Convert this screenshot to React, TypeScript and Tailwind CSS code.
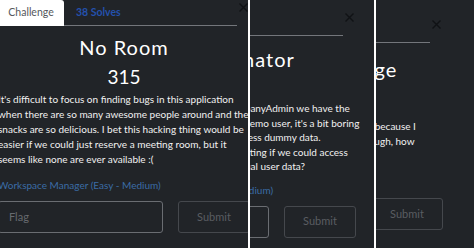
import React from 'react';

type ModalProps = {
  title: string;
  points: string;
  lines: string[];
  link: string;
  shift: string;
  top: string;
  titleMt: string;
  pointsMt: string;
  linkMt: string;
  leading: string;
};

const CloseIcon = () => (
  <svg className="ml-[2px] mr-[2px] mt-[3px] shrink-0" width="9" height="9" viewBox="0 0 9 9">
    <path d="M0.5 0.5 L8.5 8.5 M8.5 0.5 L0.5 8.5" stroke="#101215" strokeWidth="1.4" />
  </svg>
);

const ChallengeModal = ({ title, points, lines, link, shift, top, titleMt, pointsMt, linkMt, leading }: ModalProps) => (
  <div className={`flex w-[252px] shrink-0 flex-col ${shift} ${top}`}>
    <div className="flex h-[26px] items-start">
      <div className="flex h-full flex-1">
        <div className="flex w-[66px] items-center justify-center rounded-t-[3px] border-b border-white bg-white text-[10.5px] text-[#55585c]">
          Challenge
        </div>
        <div className="flex flex-1 items-center border-b border-[#73767b] pl-[12px] text-[10.5px] font-bold text-[#2451ad]">
          38 Solves
        </div>
      </div>
      <CloseIcon />
    </div>

    <h2 className={`${titleMt} text-center text-[20px] leading-[24px] tracking-[1px] text-white`}>{title}</h2>
    <h3 className={`${pointsMt} text-center text-[19px] leading-[22px] text-white`}>{points}</h3>

    <p className={`mt-[4px] whitespace-nowrap text-[10px] ${leading} text-[#f1f1f1]`}>
      {lines.map((line, i) => (
        <React.Fragment key={i}>
          {line}
          {i < lines.length - 1 && <br />}
        </React.Fragment>
      ))}
    </p>

    <a className={`${linkMt} whitespace-nowrap text-[10px] leading-[15px] text-[#3b6ca6]`}>{link}</a>

    <div className="mt-[8px] flex gap-[15px]">
      <div className="flex h-[32px] flex-1 items-center rounded-[3px] border border-[#6a6d72] pl-[10px] text-[11px] text-[#676a6f]">
        Flag
      </div>
      <div className="flex h-[32px] w-[72px] items-center justify-center rounded-[3px] border border-[#45484d] text-[11px] text-[#5a5d62]">
        Submit
      </div>
    </div>
  </div>
);

export default function App() {
  return (
    <div className="flex h-[248px] w-[474px] overflow-hidden bg-[#212428] font-[Lato,sans-serif]">
      <div className="flex w-[250px] shrink-0 overflow-hidden border-r-2 border-white">
        <ChallengeModal
          title="No Room"
          points="315"
          lines={[
            "It's difficult to focus on finding bugs in this application",
            'when there are so many awesome people around and the',
            'snacks are so delicious. I bet this hacking thing would be',
            'easier if we could just reserve a meeting room, but it',
            'seems like none are ever available :(',
          ]}
          link="Workspace Manager (Easy - Medium)"
          shift="ml-[-2px]"
          top="mt-0"
          titleMt="mt-[9px]"
          pointsMt="mt-[7px]"
          linkMt="mt-[11px]"
          leading="leading-[15px]"
        />
      </div>

      <div className="flex w-[126px] shrink-0 overflow-hidden border-r-2 border-white">
        <ChallengeModal
          title="Impersonator"
          points="250"
          lines={[
            "When you're logged in as a CompanyAdmin we have the",
            "permissions to impersonate the demo user, it's a bit boring",
            'since the demo user can only access dummy data.',
            'It would be so much more interesting if we could access',
            'all the user accounts and the actual user data?',
          ]}
          link="Account Management (Easy - Medium)"
          shift="ml-[-146px]"
          top="mt-[10px]"
          titleMt="mt-[11px]"
          pointsMt="mt-[4px]"
          linkMt="mt-[9px]"
          leading="leading-[14.5px]"
        />
      </div>

      <div className="flex flex-1 overflow-hidden">
        <ChallengeModal
          title="Executive Fridge"
          points="400"
          lines={[
            "I'd love a snack from the executive fridge, because I",
            "I deserve it now I've coded more than enough, how",
            'can I get in?',
          ]}
          link="Office Manager (Medium)"
          shift="ml-[-185px]"
          top="mt-[17px]"
          titleMt="mt-[14px]"
          pointsMt="mt-[12px]"
          linkMt="mt-[11px]"
          leading="leading-[15px]"
        />
      </div>
    </div>
  );
}
